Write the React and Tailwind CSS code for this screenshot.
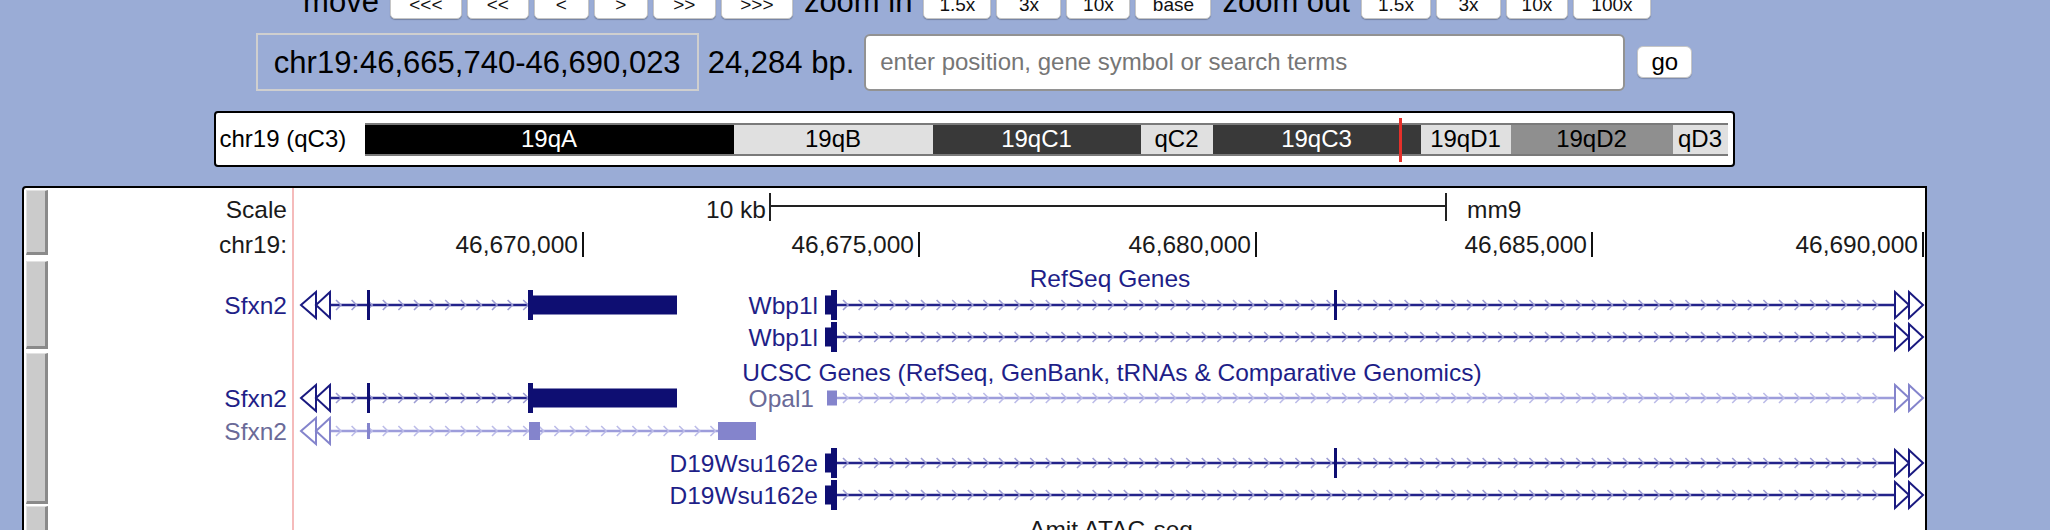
import React from 'react';

const SVG_FONT = '"Liberation Sans", Arial, sans-serif';

const DARK = '#0e0e72';
const DARK_LINE = '#23238a';
const DARK_CHEV = '#9d9dd3';
const DARK_LABEL = '#1f1f88';
const LIGHT = '#8484cc';
const LIGHT_LINE = '#9d9ddb';
const LIGHT_CHEV = '#bcbce8';
const LIGHT_LABEL = '#6a6a98';

const moveButtons = [
  { label: '<<<', w: 'w-[72px]' },
  { label: '<<', w: 'w-[62px]' },
  { label: '<', w: 'w-[55px]' },
  { label: '>', w: 'w-[54px]' },
  { label: '>>', w: 'w-[63px]' },
  { label: '>>>', w: 'w-[72px]' },
];
const zoomInButtons = [
  { label: '1.5x', w: 'w-[68px]' },
  { label: '3x', w: 'w-[65px]' },
  { label: '10x', w: 'w-[64px]' },
  { label: 'base', w: 'w-[76px]' },
];
const zoomOutButtons = [
  { label: '1.5x', w: 'w-[70px]' },
  { label: '3x', w: 'w-[65px]' },
  { label: '10x', w: 'w-[62px]' },
  { label: '100x', w: 'w-[78px]' },
];

const bands = [
  { label: '19qA', w: 'w-[369px]', cls: 'bg-black text-white' },
  { label: '19qB', w: 'w-[199px]', cls: 'bg-[#e0e0e0] text-black' },
  { label: '19qC1', w: 'w-[208px]', cls: 'bg-[#393939] text-white' },
  { label: 'qC2', w: 'w-[72px]', cls: 'bg-[#e0e0e0] text-black' },
  { label: '19qC3', w: 'w-[208px]', cls: 'bg-[#393939] text-white' },
  { label: '19qD1', w: 'w-[90px]', cls: 'bg-[#e0e0e0] text-black' },
  { label: '19qD2', w: 'w-[162px]', cls: 'bg-[#8f8f8f] text-black' },
  { label: 'qD3', w: 'w-[55px]', cls: 'bg-[#e0e0e0] text-black' },
];

const ticks = [
  { x: 583, label: '46,670,000' },
  { x: 919, label: '46,675,000' },
  { x: 1256, label: '46,680,000' },
  { x: 1592, label: '46,685,000' },
  { x: 1923, label: '46,690,000' },
];

const sfxn2 = (y) => ({
  y, label: 'Sfxn2', labelX: 287, x1: 330, x2: 531, left: true,
  blocks: [{ x: 367, w: 3, h: 30 }, { x: 528, w: 5, h: 30 }, { x: 531, w: 146, h: 19 }],
});
const wbp = (y, label, tick) => ({
  y, label, labelX: 818, x1: 837, x2: 1894, right: true,
  blocks: [{ x: 825, w: 6, h: 19 }, { x: 831, w: 6, h: 30 }, ...(tick ? [{ x: 1334, w: 3, h: 30 }] : [])],
});

const genes = [
  sfxn2(305),
  wbp(305, 'Wbp1l', true),
  wbp(337, 'Wbp1l', false),
  sfxn2(398),
  { y: 398, label: 'Opal1', labelX: 814, x1: 837, x2: 1894, right: true, light: true, blocks: [{ x: 827, w: 10, h: 15 }] },
  {
    y: 431, label: 'Sfxn2', labelX: 287, x1: 330, x2: 718, left: true, light: true,
    blocks: [{ x: 367, w: 3, h: 16 }, { x: 529, w: 11, h: 18 }, { x: 718, w: 38, h: 18 }],
  },
  wbp(463, 'D19Wsu162e', true),
  wbp(495, 'D19Wsu162e', false),
];

function chevrons(x1, x2, y) {
  let d = '';
  for (let x = x1 + 9; x < x2 - 4; x += 15.6) {
    d += `M${(x - 3).toFixed(1)} ${y - 5}L${(x + 2).toFixed(1)} ${y}L${(x - 3).toFixed(1)} ${y + 5}`;
  }
  return d;
}

function Gene({ y, label, labelX, x1, x2, blocks, left, right, light }) {
  const fill = light ? LIGHT : DARK;
  const line = light ? LIGHT_LINE : DARK_LINE;
  const chev = light ? LIGHT_CHEV : DARK_CHEV;
  const edge = light ? LIGHT : '#1a1a80';
  return (
    <g>
      <text x={labelX} y={y + 9} textAnchor="end" fill={light ? LIGHT_LABEL : DARK_LABEL}>{label}</text>
      <line x1={x1} x2={x2} y1={y} y2={y} stroke={line} strokeWidth="2.5" />
      <path d={chevrons(x1, x2, y)} stroke={chev} strokeWidth="1.6" fill="none" />
      {blocks.map((b, i) => (
        <rect key={i} x={b.x} y={y - b.h / 2} width={b.w} height={b.h} fill={fill} />
      ))}
      {left && (
        <g stroke={edge} strokeWidth="2" fill="white">
          <polygon points={`316,${y - 13} 301,${y} 316,${y + 13}`} />
          <polygon points={`330,${y - 13} 316,${y} 330,${y + 13}`} />
        </g>
      )}
      {right && (
        <g stroke={edge} strokeWidth="2" fill="white">
          <polygon points={`1895,${y - 13} 1909,${y} 1895,${y + 13}`} />
          <polygon points={`1909,${y - 13} 1923,${y} 1909,${y + 13}`} />
        </g>
      )}
    </g>
  );
}

function NavButton({ label, w }) {
  return (
    <button className={`${w} flex h-[30px] items-center justify-center rounded-[5px] border border-[#c6c6c6] bg-white text-[19px] leading-none text-[#111] shadow-[0_1px_1px_rgba(0,0,0,0.25)]`}>
      {label}
    </button>
  );
}

function Word({ children }) {
  return <span className="px-[6px] pb-[5px] text-[31px] leading-[31px] text-black">{children}</span>;
}

function Handle({ h, mt }) {
  return (
    <div className={`${h} ${mt} w-[22px] border-t border-l border-r-[3px] border-b-[3px] border-t-[#e2e2e2] border-l-[#e2e2e2] border-r-[#8a8a8a] border-b-[#8a8a8a] bg-[#cbcbcb]`} />
  );
}

export default function App() {
  return (
    <div className="h-[530px] w-[2050px] overflow-hidden bg-[#9aacd6] font-['Liberation_Sans',Arial,sans-serif]">
      <div className="flex w-[1948px] flex-col items-center">
        {/* navigation row */}
        <div className="-mt-[11px] flex h-[30px] items-center justify-center gap-[5px]">
          <Word>move</Word>
          {moveButtons.map((b) => <NavButton key={b.label} {...b} />)}
          <Word>zoom in</Word>
          {zoomInButtons.map((b) => <NavButton key={b.label} {...b} />)}
          <Word>zoom out</Word>
          {zoomOutButtons.map((b) => <NavButton key={'o' + b.label} {...b} />)}
        </div>

        {/* position row */}
        <div className="mt-[14px] flex h-[58px] items-center justify-center">
          <div className="flex h-[58px] w-[443px] items-center justify-center border-2 border-[#cfcfcf] text-[31px] leading-none text-black">
            chr19:46,665,740-46,690,023
          </div>
          <span className="ml-[9px] text-[31px] leading-none text-black">24,284 bp.</span>
          <input
            className="ml-[10px] h-[57px] w-[761px] rounded-[6px] border-2 border-[#929292] bg-white pl-[14px] text-[24px] text-black outline-none placeholder:text-[#767676]"
            placeholder="enter position, gene symbol or search terms"
            readOnly
          />
          <button className="ml-[12px] flex h-[32px] w-[55px] items-center justify-center rounded-[6px] border border-[#c6c6c6] bg-white text-[24px] leading-none text-black shadow-[0_1px_1px_rgba(0,0,0,0.2)]">
            go
          </button>
        </div>

        {/* chromosome ideogram */}
        <div className="mt-[20px] flex h-[56px] w-[1521px] items-center rounded-[4px] border-2 border-black bg-white">
          <span className="w-[149px] pl-[4px] text-[24px] leading-none text-black">chr19 (qC3)</span>
          <div className="relative flex h-[33px] border-y-2 border-[#7a7a7a]">
            {bands.map((b) => (
              <div key={b.label} className={`${b.w} ${b.cls} flex items-center justify-center text-[24px] leading-none`}>
                {b.label}
              </div>
            ))}
            <div className="absolute -top-[7px] -bottom-[8px] left-[1034px] w-[3px] bg-[#e6302a]" />
          </div>
        </div>

        {/* track panel */}
        <div className="mt-[19px] flex h-[420px] w-[1905px] rounded-tl-[4px] border-2 border-black bg-white">
          <div className="ml-[2px] flex flex-col">
            <Handle h="h-[67px]" mt="mt-[2px]" />
            <Handle h="h-[90px]" mt="mt-[6px]" />
            <Handle h="h-[155px]" mt="mt-[4px]" />
            <Handle h="h-[100px]" mt="mt-[2px]" />
          </div>
          <svg width="1877" height="360" viewBox="48 188 1877 360" fontFamily={SVG_FONT} fontSize="24.5">
            <line x1="293" x2="293" y1="188" y2="548" stroke="#f2a4a4" strokeWidth="1.5" />

            {/* scale */}
            <text x="287" y="218" textAnchor="end" fill="#1a1a1a">Scale</text>
            <text x="287" y="253" textAnchor="end" fill="#1a1a1a">chr19:</text>
            <text x="766" y="218" textAnchor="end" fill="#1a1a1a">10 kb</text>
            <g stroke="#222" strokeWidth="2">
              <line x1="770" x2="1446" y1="206" y2="206" />
              <line x1="770" x2="770" y1="193" y2="221" />
              <line x1="1446" x2="1446" y1="193" y2="221" />
            </g>
            <text x="1467" y="218" fill="#1a1a1a">mm9</text>
            {ticks.map((t) => (
              <g key={t.label}>
                <text x={t.x - 5} y="253" textAnchor="end" fill="#1a1a1a">{t.label}</text>
                <line x1={t.x} x2={t.x} y1="232" y2="257" stroke="#111" strokeWidth="2" />
              </g>
            ))}

            {/* track titles */}
            <text x="1110" y="287" textAnchor="middle" fill="#1e1e88">RefSeq Genes</text>
            <text x="1112" y="381" textAnchor="middle" fill="#1e1e88">UCSC Genes (RefSeq, GenBank, tRNAs &amp; Comparative Genomics)</text>
            <text x="1111" y="538" textAnchor="middle" fill="#1a1a1a">Amit ATAC-seq</text>

            {genes.map((g, i) => <Gene key={i} {...g} />)}
          </svg>
        </div>
      </div>
    </div>
  );
}
